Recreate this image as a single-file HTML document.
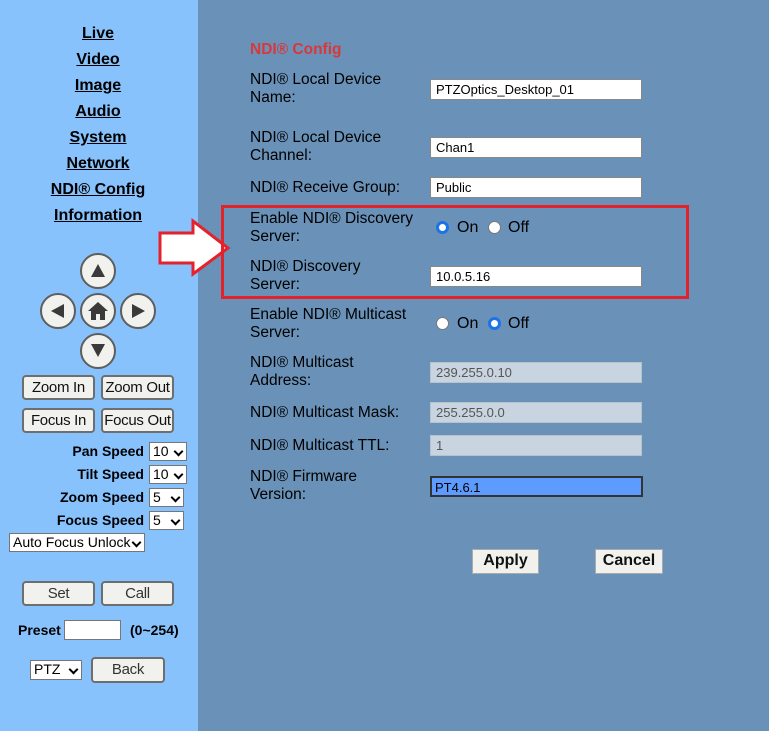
<!DOCTYPE html>
<html><head><meta charset="utf-8"><style>
*{box-sizing:border-box;margin:0;padding:0}
body{width:769px;height:731px;overflow:hidden;font-family:"Liberation Sans",Arial,sans-serif;background:#6a91b8;position:relative}
#side{position:absolute;left:0;top:0;width:198px;height:731px;background:#88c2fd}
.a{position:absolute}
.nav{position:absolute;left:0;width:196px;text-align:center;font-weight:bold;font-size:16px;color:#000;text-decoration:underline;line-height:18px}
.btn{position:absolute;background:#f1f1ed;border:2px solid #6e6e6e;border-radius:4px;font-size:15px;text-align:center;color:#111;white-space:nowrap;letter-spacing:-0.3px}
.circ{position:absolute;width:36px;height:36px;border-radius:50%;background:#f1f1ed;border:2px solid #5e5e5e}
.sl{position:absolute;font-weight:bold;font-size:14px;text-align:right;right:625px;line-height:16px;white-space:nowrap}
.sel{position:absolute;background:#fff;border:1px solid #767676;font-size:14px;height:19px;line-height:17px;padding-left:3px}
.sel::after{content:"";position:absolute;right:4px;top:5px;width:5px;height:5px;border-right:2px solid #000;border-bottom:2px solid #000;transform:rotate(45deg)}
.lb{position:absolute;left:250px;font-size:15.5px;line-height:18px;color:#000}
.in{position:absolute;left:430px;width:212px;height:21px;background:#fff;border:1px solid #888;font-size:13px;padding-left:5px;line-height:19px}
.dis{background:#c8d4e0;border-color:#b7c2cc;color:#555}
.rad{position:absolute;width:13px;height:13px;border-radius:50%;background:#fff;border:1px solid #777}
.rad.on{border:3.5px solid #1a73e8;background:#fff}
.rt{position:absolute;font-size:16px;line-height:18px}
</style></head><body>
<div id="side"></div>
<div class="nav" style="top:25px">Live</div>
<div class="nav" style="top:51px">Video</div>
<div class="nav" style="top:77px">Image</div>
<div class="nav" style="top:103px">Audio</div>
<div class="nav" style="top:129px">System</div>
<div class="nav" style="top:155px">Network</div>
<div class="nav" style="top:181px">NDI® Config</div>
<div class="nav" style="top:207px">Information</div>

<div class="circ" style="left:80px;top:253px"></div>
<div class="circ" style="left:40px;top:293px"></div>
<div class="circ" style="left:80px;top:293px"></div>
<div class="circ" style="left:120px;top:293px"></div>
<div class="circ" style="left:80px;top:333px"></div>
<svg class="a" style="left:0;top:240px" width="200" height="140" viewBox="0 0 200 140">
<polygon points="91,37 105,37 98,24" fill="#3a3a3a"/>
<polygon points="91,104 105,104 98,117" fill="#3a3a3a"/>
<polygon points="64,64 64,78 51,71" fill="#3a3a3a"/>
<polygon points="132,64 132,78 145,71" fill="#3a3a3a"/>
<polygon points="88,71 98,62 108,71 105,71 105,80 100,80 100,74 96,74 96,80 91,80 91,71" fill="#3a3a3a"/>
</svg>

<div class="btn" style="left:22px;top:375px;width:73px;height:25px;line-height:21px">Zoom In</div>
<div class="btn" style="left:101px;top:375px;width:73px;height:25px;line-height:21px">Zoom Out</div>
<div class="btn" style="left:22px;top:408px;width:73px;height:25px;line-height:21px">Focus In</div>
<div class="btn" style="left:101px;top:408px;width:73px;height:25px;line-height:21px">Focus Out</div>

<div class="sl" style="top:443px">Pan Speed</div><div class="sel" style="left:149px;top:442px;width:38px">10</div>
<div class="sl" style="top:466px">Tilt Speed</div><div class="sel" style="left:149px;top:465px;width:38px">10</div>
<div class="sl" style="top:489px">Zoom Speed</div><div class="sel" style="left:149px;top:488px;width:35px">5</div>
<div class="sl" style="top:512px">Focus Speed</div><div class="sel" style="left:149px;top:511px;width:35px">5</div>
<div class="sel" style="left:9px;top:533px;width:136px;height:19px">Auto Focus Unlock</div>

<div class="btn" style="left:22px;top:581px;width:73px;height:25px;line-height:21px;color:#333">Set</div>
<div class="btn" style="left:101px;top:581px;width:73px;height:25px;line-height:21px;color:#333">Call</div>
<div class="a" style="left:18px;top:622px;font-weight:bold;font-size:14px">Preset</div>
<div class="a" style="left:64px;top:620px;width:57px;height:20px;background:#fff;border:1px solid #777"></div>
<div class="a" style="left:130px;top:622px;font-weight:bold;font-size:14px">(0~254)</div>
<div class="sel" style="left:30px;top:660px;width:52px;height:20px">PTZ</div>
<div class="btn" style="left:91px;top:657px;width:74px;height:26px;line-height:22px;color:#333">Back</div>

<svg class="a" style="left:155px;top:215px" width="80" height="65" viewBox="0 0 80 65">
<polygon points="5,18 38,18 38,6 73,33 38,59 38,48 5,48" fill="#fff" stroke="#e3222c" stroke-width="3"/>
</svg>

<div class="a" style="left:250px;top:41px;color:#d8383b;font-weight:bold;font-size:15.5px">NDI® Config</div>
<div class="lb" style="top:71px">NDI® Local Device<br>Name:</div>
<div class="in" style="top:79px">PTZOptics_Desktop_01</div>
<div class="lb" style="top:129px">NDI® Local Device<br>Channel:</div>
<div class="in" style="top:137px">Chan1</div>
<div class="lb" style="top:179px">NDI® Receive Group:</div>
<div class="in" style="top:177px">Public</div>

<div class="a" style="left:221px;top:205px;width:468px;height:94px;border:3px solid #e3222c"></div>
<div class="lb" style="top:210px">Enable NDI® Discovery<br>Server:</div>
<div class="rad on" style="left:436px;top:221px"></div><div class="rt" style="left:457px;top:219px">On</div>
<div class="rad" style="left:488px;top:221px"></div><div class="rt" style="left:508px;top:219px">Off</div>
<div class="lb" style="top:258px">NDI® Discovery<br>Server:</div>
<div class="in" style="top:266px">10.0.5.16</div>

<div class="lb" style="top:306px">Enable NDI® Multicast<br>Server:</div>
<div class="rad" style="left:436px;top:317px"></div><div class="rt" style="left:457px;top:315px">On</div>
<div class="rad on" style="left:488px;top:317px"></div><div class="rt" style="left:508px;top:315px">Off</div>
<div class="lb" style="top:354px">NDI® Multicast<br>Address:</div>
<div class="in dis" style="top:362px">239.255.0.10</div>
<div class="lb" style="top:404px">NDI® Multicast Mask:</div>
<div class="in dis" style="top:402px">255.255.0.0</div>
<div class="lb" style="top:437px">NDI® Multicast TTL:</div>
<div class="in dis" style="top:435px">1</div>
<div class="lb" style="top:468px">NDI® Firmware<br>Version:</div>
<div class="in" style="top:476px;background:#5e9bff;border:2px solid #333;width:213px;padding-left:3px">PT4.6.1</div>

<div class="btn" style="left:472px;top:549px;width:67px;height:25px;line-height:22px;font-weight:bold;font-size:16px;border-radius:0;border:1px solid #aaa;letter-spacing:0">Apply</div>
<div class="btn" style="left:595px;top:549px;width:68px;height:25px;line-height:22px;font-weight:bold;font-size:16px;border-radius:0;border:1px solid #aaa;letter-spacing:0">Cancel</div>
</body></html>
